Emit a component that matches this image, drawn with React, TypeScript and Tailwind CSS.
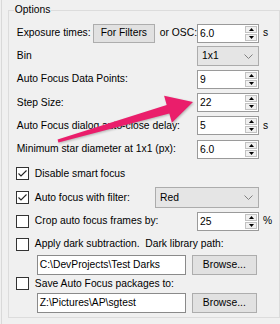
import React from 'react';

// Windows-Forms style "Options" group box with a highlight arrow
const Triangle = ({ up }: { up: boolean }) => (
  <svg width="5" height="3" viewBox="0 0 5 3">
    <path d={up ? 'M0 3 L2.5 0 L5 3 Z' : 'M0 0 L2.5 3 L5 0 Z'} fill="#000" />
  </svg>
);

const Spin = ({ value }: { value: string }) => (
  <div className="flex h-[19px] w-[62px] border border-[#9a9a9a] bg-white">
    <span className="flex-1 pl-[2px] leading-[17px]">{value}</span>
    <div className="flex w-[13px] flex-col gap-px py-px pr-px">
      <div className="flex flex-1 items-center justify-center border border-[#c2c2c2] bg-[#f0f0f0]">
        <Triangle up />
      </div>
      <div className="flex flex-1 items-center justify-center border border-[#c2c2c2] bg-[#f0f0f0]">
        <Triangle up={false} />
      </div>
    </div>
  </div>
);

const Chevron = () => (
  <svg width="9" height="5" viewBox="0 0 9 5">
    <path d="M0.5 0.5 L4.5 4.5 L8.5 0.5" fill="none" stroke="#808080" strokeWidth="1" />
  </svg>
);

const Combo = ({ value, className }: { value: string; className: string }) => (
  <div className={`flex items-center border border-[#acacac] bg-[#e5e5e5] pl-[4px] pr-[5px] ${className}`}>
    <span className="flex-1">{value}</span>
    <Chevron />
  </div>
);

const Check = ({ checked }: { checked?: boolean }) => (
  <div className="ml-[-1px] mr-[6px] flex h-[13px] w-[13px] shrink-0 items-center justify-center border border-[#333] bg-white">
    {checked && (
      <svg width="11" height="11" viewBox="0 0 11 11">
        <path d="M1.5 5.5 L4 8 L9.5 2.5" fill="none" stroke="#222" strokeWidth="1.1" />
      </svg>
    )}
  </div>
);

const Unit = ({ text }: { text?: string }) => <span className="w-[14px] pl-[4px]">{text}</span>;

const Btn = ({ label, className }: { label: string; className: string }) => (
  <div className={`flex items-center justify-center border border-[#adadad] bg-[#e1e1e1] ${className}`}>{label}</div>
);

const TextBox = ({ value }: { value: string }) => (
  <div className="ml-[20px] flex h-[20px] w-[149px] items-center border border-[#8a8a8a] bg-white pl-[2px]">{value}</div>
);

export default function App() {
  return (
    <div className="relative h-[324px] w-[280px] overflow-hidden whitespace-nowrap bg-[#f0f0f0] font-['Liberation_Sans',sans-serif] text-[10.3px] text-black">
      <div className="flex h-full">
        <div className="w-[3px]" />
        <div className="w-px bg-[#d9d9d9]" />
        <div className="pl-[7px] pt-[4px]">
          <fieldset className="w-[272px] border border-[#dcdcdc] pb-[5px] pl-[8px] pr-[6px]">
            <legend className="ml-[-3px] px-px leading-[12px]">Options</legend>
            <div className="flex flex-col pt-[5px]">
              <div className="flex h-[24px] items-center">
                <span className="w-[76px]">Exposure times:</span>
                <Btn label="For Filters" className="h-[19px] w-[62px]" />
                <span className="ml-[5px] flex-1">or OSC:</span>
                <Spin value="6.0" />
                <Unit text="s" />
              </div>
              <div className="flex h-[22px] items-center">
                <span className="flex-1">Bin</span>
                <Combo value="1x1" className="h-[20px] w-[62px]" />
                <Unit />
              </div>
              <div className="flex h-[24px] items-center">
                <span className="flex-1">Auto Focus Data Points:</span>
                <Spin value="9" />
                <Unit />
              </div>
              <div className="flex h-[23px] items-center">
                <span className="flex-1">Step Size:</span>
                <Spin value="22" />
                <Unit />
              </div>
              <div className="flex h-[23px] items-center">
                <span className="flex-1">Auto Focus dialog auto-close delay:</span>
                <Spin value="5" />
                <Unit text="s" />
              </div>
              <div className="flex h-[24px] items-center">
                <span className="flex-1">Minimum star diameter at 1x1 (px):</span>
                <Spin value="6.0" />
                <Unit />
              </div>
              <div className="flex h-[25px] items-center">
                <Check checked />
                <span>Disable smart focus</span>
              </div>
              <div className="flex h-[23px] items-center">
                <Check checked />
                <span className="flex-1">Auto focus with filter:</span>
                <Combo value="Red" className="h-[21px] w-[104px]" />
                <Unit />
              </div>
              <div className="flex h-[24px] items-center">
                <Check />
                <span className="flex-1">Crop auto focus frames by:</span>
                <Spin value="25" />
                <Unit text="%" />
              </div>
              <div className="flex h-[22px] items-center">
                <Check />
                <span className="whitespace-pre">Apply dark subtraction.  Dark library path:</span>
              </div>
              <div className="flex h-[19px] items-center">
                <TextBox value="C:\DevProjects\Test Darks" />
                <Btn label="Browse..." className="ml-[6px] h-[20px] w-[65px]" />
              </div>
              <div className="flex h-[19px] items-center">
                <Check />
                <span>Save Auto Focus packages to:</span>
              </div>
              <div className="flex h-[19px] items-center">
                <TextBox value="Z:\Pictures\AP\sgtest" />
                <Btn label="Browse..." className="ml-[6px] h-[20px] w-[65px]" />
              </div>
            </div>
          </fieldset>
        </div>
      </div>

      {/* pink callout arrow pointing at Step Size */}
      <svg
        className="pointer-events-none absolute left-0 top-0 drop-shadow-[1px_1px_1px_rgba(0,0,0,0.25)]"
        width="280"
        height="324"
        viewBox="0 0 280 324"
      >
        <path
          d="M57.6 139.6 L166.7 104.9 L164.1 95.7 L193 102 L171.9 122.7 L169.3 113.5 L58.4 142.4 Z"
          fill="#ea1e6b"
        />
      </svg>
    </div>
  );
}
